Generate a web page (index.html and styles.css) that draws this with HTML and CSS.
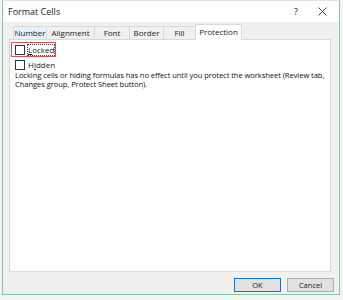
FILE: index.html
```html
<!DOCTYPE html>
<html>
<head>
<meta charset="utf-8">
<link rel="stylesheet" href="styles.css">
</head>
<body>
<div class="frame">
  <div class="dialog">
    <div class="titlebar">
      <span class="title">Format Cells</span>
      <span class="help">?</span>
      <span class="close">
        <svg width="9" height="9" viewBox="0 0 9 9"><path d="M0.5 0.5L8.5 8.5M8.5 0.5L0.5 8.5" stroke="#333" stroke-width="0.9" fill="none"/></svg>
      </span>
    </div>
    <div class="tabs">
      <div class="tab hover t-number">Number</div>
      <div class="tab t-align">Alignment</div>
      <div class="tab t-font">Font</div>
      <div class="tab t-border">Border</div>
      <div class="tab t-fill">Fill</div>
      <div class="tab active t-prot">Protection</div>
    </div>
    <div class="panel">
      <div class="check highlight"><span class="box"></span><span class="label focus"><u>L</u>ocked</span></div>
      <div class="check"><span class="box"></span><span class="label">H<u>i</u>dden</span></div>
      <p class="note">Locking cells or hiding formulas has no effect until you protect the worksheet (Review tab, Changes group, Protect Sheet button).</p>
    </div>
    <div class="buttons">
      <div class="btn default">OK</div>
      <div class="btn">Cancel</div>
    </div>
  </div>
</div>
</body>
</html>
```
FILE: styles.css
```css
html, body {
  margin: 0;
  padding: 0;
  background: #f4f4f4;
}
body {
  width: 343px;
  height: 300px;
  font-family: "Open Sans", "Noto Sans", sans-serif;
  color: #1a1a1a;
}
.frame {
  padding: 0 3px 0 2px;
  height: 296px;
}
.dialog {
  height: 295px;
  background: #f0f0f0;
  border: 1px solid #7fcaa3;
  border-top: 1px solid #d8e8de;
  display: flex;
  flex-direction: column;
  box-sizing: border-box;
}
.titlebar {
  height: 21px;
  display: flex;
  align-items: center;
  padding: 0 12px 0 5px;
  background: #ffffff;
  font-size: 9px;
  color: #222;
}
.title { flex: 1; }
.help { margin-right: 20px; font-size: 9px; }
.close { display: flex; }
.tabs {
  display: flex;
  align-items: flex-end;
  padding: 3px 0 0 10px;
  height: 14px;
  font-size: 8px;
}
.tab {
  height: 13px;
  line-height: 12px;
  text-align: center;
  border: 1px solid #d9d9d9;
  border-bottom: none;
  margin-right: -1px;
  background: #f0f0f0;
  color: #222;
  box-sizing: border-box;
}
.t-number { width: 34px; }
.t-align { width: 49px; }
.t-font { width: 36px; }
.t-border { width: 35px; }
.t-fill { width: 33px; }
.t-prot { width: 47px; }
.tab.hover { background: #e5f1fb; }
.tab.active {
  height: 16px;
  line-height: 13px;
  background: #fff;
  margin-bottom: -1px;
  position: relative;
  z-index: 1;
}
.panel {
  margin: 0 8px 0 6px;
  height: 233px;
  background: #fff;
  border: 1px solid #d9d9d9;
  padding: 3px 4px 0 5px;
  box-sizing: border-box;
  font-size: 8px;
  line-height: 10px;
}
.check {
  display: flex;
  align-items: center;
  height: 11px;
}
.check.highlight {
  outline: 1.5px solid #d65252;
  width: 40px;
  height: 13px;
  margin: 0 0 3px -3px;
  padding-left: 3px;
}
.box {
  width: 8px;
  height: 8px;
  border: 1px solid #333;
  background: #fff;
  margin-right: 3px;
}
.label.focus {
  outline: 1px dotted #444;
  line-height: 10px;
}
.note {
  margin: 1px 0 0 0;
  line-height: 9px;
  font-size: 7.6px;
  letter-spacing: -0.08px;
  color: #111;
}
.buttons {
  display: flex;
  justify-content: flex-end;
  gap: 6px;
  padding: 6px 5px 0 0;
}
.btn {
  width: 47px;
  height: 14px;
  box-sizing: border-box;
  border: 1px solid #adadad;
  background: #e1e1e1;
  font-size: 7.5px;
  text-align: center;
  line-height: 12px;
}
.btn.default {
  border: 1px solid #0078d7;
}
```
